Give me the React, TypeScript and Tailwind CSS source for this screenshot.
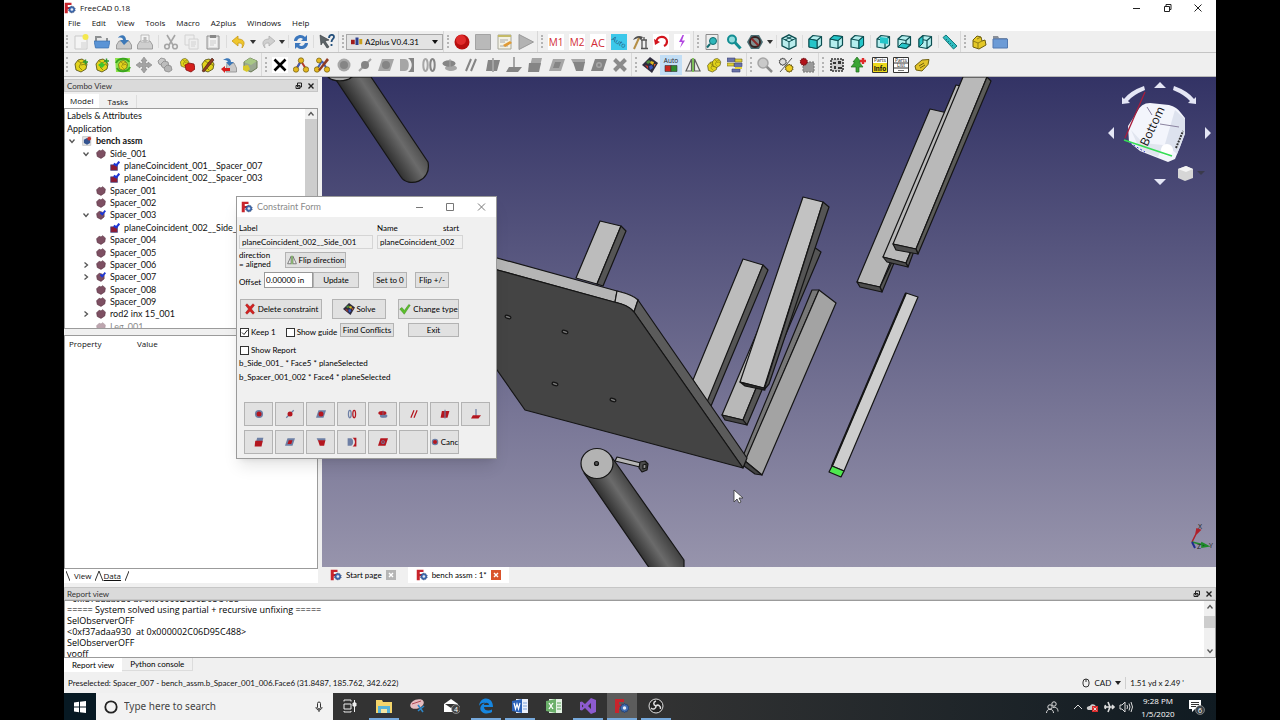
import { useState } from "react";
import type { ReactNode } from "react";
import { clsx } from "clsx";

const gearPath =
    "M8 1.5l1.2 2 2.2-.6.4 2.3 2.2.8-1 2 1 2-2.2.8-.4 2.3-2.2-.6L8 14.5l-1.2-2-2.2.6-.4-2.3-2.2-.8 1-2-1-2 2.2-.8.4-2.3 2.2.6z";

const part = (
    <g stroke="#4b4710" strokeWidth="0.8" strokeLinejoin="round">
        <path d="M2 7l3-4 4-1 3 2 2 3-1 5-5 3-5-2z" fill="#e2d31c" />
        <path d="M5 4l3 2 4-2M8 6l-2 4 3 3M8 8l4-1 1 2" fill="none" stroke="#7d750f" />
    </g>
);

const greyPart = (
    <g stroke="#8a8a8a" strokeWidth="0.8" strokeLinejoin="round">
        <path d="M1 4l3-3 4 1 1 4-3 3-4-2z" fill="#c9c9c9" />
        <path d="M4 7l3-3 4 1 1 4-3 3-4-2z" fill="#bdbdbd" />
        <path d="M7 11l3-3 4 1 1 4-3 2-4-1z" fill="#b5b5b5" />
    </g>
);

const cube = (
    <path
        d="M2 5l4-3.5 8.5 1V11L10 14.5 2 13zM2 5l8 1.5v8M10 6.5l4.5-4"
        fill="#b4eeee"
        stroke="#0b4d50"
        strokeWidth="1.2"
        strokeLinejoin="round"
    />
);

const freecad = (
    <>
        <path d="M1 1h9v3H5v2.5h3.5v3H5V15H1z" fill="#c8242c" />
        <g transform="translate(4.5 4) scale(.75)">
            <path d={gearPath} fill="#3f6db3" stroke="#203d73" strokeWidth="1" />
            <circle cx="8" cy="8" r="2.3" fill="#e8ecf5" />
        </g>
    </>
);

// constraint pictograms are drawn once and tinted: a = moved part, b = fixed part
function constraint(kind: string, a: string, b: string): ReactNode {
    switch (kind) {
        case "point":
            return <><circle cx="8" cy="8" r="6.5" fill={b} /><circle cx="8" cy="8" r="4" fill={a} /></>;
        case "pointLine":
            return <><path d="M2 14L14 2" stroke={b} strokeWidth="2" /><circle cx="8" cy="8" r="4" fill={a} /></>;
        case "pointPlane":
            return <><path d="M4 2h12l-4 12H0z" fill={b} /><circle cx="8" cy="8" r="4" fill={a} /></>;
        case "circular":
            return <><ellipse cx="4.5" cy="8" rx="2.2" ry="6" fill="none" stroke={b} strokeWidth="2" /><ellipse cx="11.5" cy="8" rx="2.2" ry="6" fill="none" stroke={a} strokeWidth="2" /></>;
        case "axial":
            return <><ellipse cx="9" cy="11" rx="6" ry="3" fill={b} /><ellipse cx="7" cy="6.5" rx="6.5" ry="3.2" fill={a} /><path d="M8 2v12" stroke={b} /></>;
        case "axisParallel":
            return <path d="M3 14L8 2M8 14l5-12" stroke={a} strokeWidth="2" />;
        case "axisPlane":
            return <><path d="M3 3h12l-3 11H1z" fill={a} /><path d="M8 1v14" stroke={b} strokeWidth="1.8" /></>;
        case "normal":
            return <><path d="M8 0v11" stroke={b} strokeWidth="2" /><path d="M3 10h13l-4 5H0z" fill={a} /></>;
        case "planesParallel":
            return <><path d="M5 1h10l-2 8H3z" fill={b} /><path d="M2 6h12l-2 9H1z" fill={a} /></>;
        case "coincident":
            return <><path d="M4 2h12l-4 12H0z" fill={b} /><path d="M6 5h6l-2 6H4z" fill={a} /></>;
        case "angled":
            return <><path d="M1 2h14v4H3z" fill={b} /><path d="M3 5h12l-2 9H6z" fill={a} /></>;
        case "sphere":
            return <><path d="M1 2h5c5 0 5 12 0 12H1z" fill={b} /><path d="M9 1h6v14H9c5-4 5-10 0-14z" fill={a} /></>;
        case "centerOfMass":
            return <><path d="M4 2h12l-4 12H0z" fill={a} /><circle cx="8" cy="8" r="3" fill={b} /><circle cx="8" cy="8" r="1.5" fill={a} /></>;
        default:
            return null;
    }
}

const constraintKinds = [
    "point", "pointLine", "pointPlane", "sphere", "circular", "axial", "axisParallel",
    "axisPlane", "normal", "planesParallel", "coincident", "angled", "centerOfMass",
];

const icons: Record<string, ReactNode> = {
    freecad,
    new: <><path d="M2 2h12v13H2z" fill="#f4f4f4" stroke="#c9c9c9" /><circle cx="12.5" cy="3" r="3" fill="#f4e84f" /><path d="M8 8h5v6H8z" fill="#e2e2e2" /></>,
    open: <><path d="M1 2h6l1 2h6v9H1z" fill="#8d9092" /><path d="M3 4h9v6H3z" fill="#e8e8e8" /><path d="M0 7h16l-1.5 7H1.500z" fill="#5a94d6" stroke="#386fae" strokeWidth=".7" /></>,
    save: <><path d="M3 7h10l2.500 4v4H.5v-4z" fill="#c9c9c9" stroke="#8b8b8b" strokeWidth=".8" /><path d="M2 4c2-4 8-4 8 2h3L8 11 4 6h3c0-2-2-3-5-2z" fill="#3c78b8" /></>,
    saveAs: <><path d="M3 7h10l2.500 4v4H.5v-4z" fill="#cfcfcf" stroke="#909090" strokeWidth=".8" /><path d="M4 1h8v7H4z" fill="#f4f4f4" stroke="#b0b0b0" strokeWidth=".8" /><path d="M6.500 3h3v3h2L8 9 4.500 6h2z" fill="#bbb" /></>,
    cut: <g fill="none" stroke="#a5a5a5" strokeWidth="1.6"><path d="M4 1l6 10M12 1L6 11" /><circle cx="4" cy="12.500" r="2.300" /><circle cx="12" cy="12.500" r="2.300" /></g>,
    copy: <g fill="#efefef" stroke="#d2d2d2"><path d="M1 1h9v10H1z" /><path d="M5 5h9v10H5z" /><path d="M7 8h5M7 10h5M7 12h4" /></g>,
    paste: <><path d="M2 2h12v13H2z" fill="#dedede" stroke="#909090" /><path d="M4 4h8v9H4z" fill="#f2f2f2" /><path d="M5 1h6v3H5z" fill="#888" /><path d="M5 7h6M5 9h6M5 11h4" stroke="#ccc" /></>,
    undo: <path d="M1 7l6-5v3c6 0 8 4 4 9 1-4 0-5-4-5v3z" fill="#efc62c" stroke="#c99a15" strokeWidth=".8" />,
    redo: <path d="M15 7L9 2v3c-6 0-8 4-4 9-1-4 0-5 4-5v3z" fill="#cfcfcf" stroke="#b0b0b0" strokeWidth=".8" />,
    refresh: <><path d="M1 7c0-6 8-8 11-4l2-2v6H8l2-2C8 3 5 4 4 7z" fill="#3c77bd" /><path d="M15 9c0 6-8 8-11 4l-2 2V9h6l-2 2c2 2 5 1 6-2z" fill="#3c77bd" /></>,
    whatsThis: <><path d="M1 1l9 5-4 1 4 6-2 1-4-6-2 3z" fill="#5d6468" stroke="#32373a" strokeWidth=".6" /><path d="M10 4c0-4 5-4 5-1 0 2-2.500 2-2.500 5M12.500 10v2" fill="none" stroke="#24507c" strokeWidth="1.800" /></>,
    record: <><circle cx="8" cy="8" r="7.500" fill="#b80f0f" /><circle cx="7" cy="6" r="5" fill="#e02b2b" /></>,
    stop: <path d="M.5.5h15v15H.5z" fill="#b9b9b9" stroke="#a3a3a3" />,
    macroEdit: <><path d="M1 1h13v14H1z" fill="#f3f1e4" stroke="#a8a89a" /><path d="M1 1h13v2H1z" fill="#c4ba67" /><path d="M3 6h8M3 8h5M3 12h8" stroke="#aaa" /><path d="M6 11l7-4 2 2-7 4z" fill="#e09a35" /></>,
    play: <path d="M1 .5l14.500 7.500L1 15.500z" fill="#b3b3b3" stroke="#999" />,
    M1: <><path d="M0 0h16v16H0z" fill="#fff" /><text x="8" y="11.500" fontSize="10" textAnchor="middle" fill="#d22c35" fontFamily="Open Sans, sans-serif">M1</text></>,
    M2: <><path d="M0 0h16v16H0z" fill="#fff" /><text x="8" y="12" fontSize="10" textAnchor="middle" fill="#d22c35" fontFamily="Open Sans, sans-serif">M2</text></>,
    AC: <><path d="M0 0h16v16H0z" fill="#fff" /><text x="8" y="12.500" fontSize="11" textAnchor="middle" fill="#d22c35" fontFamily="Open Sans, sans-serif">AC</text></>,
    autoBlue: <><path d="M0 0h16v16H0z" fill="#3cc8ea" /><text x="0" y="6" fontSize="7" transform="rotate(33 0 6)" fill="#1d5b82" fontFamily="Open Sans, sans-serif">Auto</text></>,
    tools: <><path d="M1 6c2-4 6-5 10-3L9 6 6 4z" fill="#4f4f4f" /><path d="M7 4L2 15" stroke="#b58e45" strokeWidth="2" /><path d="M10 6v8M14 6v8M9 14.500h7M9 6h6M12 3v3" stroke="#555" strokeWidth="1.300" /></>,
    redUndo: <><path d="M0 0h16v16H0z" fill="#fff" /><path d="M1 5l1 6 5-3z" fill="#d3141c" /><path d="M3.500 8c0-7 10.500-6.500 10.500-.500 0 2-1 3.500-3 4.500" fill="none" stroke="#d3141c" strokeWidth="2.200" /></>,
    bolt: <><path d="M0 0h16v16H0z" fill="#fff" /><path d="M8.500 1L5 8h3l-2 6 5-7.500H8L10 1z" fill="#b146e0" /></>,
    fitAll: <><path d="M2 .5h12v15H2z" fill="#eee" stroke="#8b8b8b" /><circle cx="9" cy="7" r="3.500" fill="#2eb6ba" stroke="#136c70" /><path d="M6 10l-3 3.500" stroke="#136c70" strokeWidth="2" /></>,
    fitSel: <><circle cx="6" cy="5.500" r="4" fill="#8fdcdc" stroke="#128d92" strokeWidth="2" /><path d="M9 8.500l5.500 6" stroke="#128d92" strokeWidth="3" /></>,
    drawStyle: <><path d="M4 1h8l4 7-4 7H4L0 8z" fill="#4a6c72" /><circle cx="8" cy="8" r="5" fill="#7f8f90" stroke="#35201f" strokeWidth="1.800" /><path d="M4.500 4.500l7 7" stroke="#8c2727" strokeWidth="2" /></>,
    iso: <><path d="M8 .8l7 3.500v7.500l-7 3.500-7-3.500V4.300z" fill="#b9ecec" stroke="#0b4d50" strokeWidth="1.300" /><path d="M1 4.300l7 3.500 7-3.500M8 8v7M5 2.500l7 3.500M11 2.500L4 6" stroke="#0b4d50" fill="none" /></>,
    front: <>{cube}<path d="M2 5l8 1.500v8L2 13z" fill="#25c5c9" stroke="#0b4d50" /></>,
    top: <>{cube}<path d="M2 5l4-3.500 8.500 1L10 6.500z" fill="#25c5c9" stroke="#0b4d50" /></>,
    right: <>{cube}<path d="M10 6.500l4.500-4V11L10 14.500z" fill="#25c5c9" stroke="#0b4d50" /></>,
    rear: <>{cube}<path d="M5 3l8 1v6L5 9z" fill="#25c5c9" /></>,
    bottom: <>{cube}<path d="M2 13l4-4 8 1.500-4 4z" fill="#25c5c9" stroke="#0b4d50" /></>,
    left: <>{cube}<path d="M2 5l4-3v7l-4 4z" fill="#25c5c9" stroke="#0b4d50" /></>,
    ruler: <path d="M1 3.500L4 1l11 11-3.500 3zM4 6l1-1M6 8l1-1M8 10l1-1M10 12l1-1" fill="#2fbcc0" stroke="#16767a" />,
    partYellow: <><path d="M2 6l4-4 4 1 1 4 3-1 1 5-7 4-6-2z" fill="#e4c826" stroke="#6e5f0e" /><path d="M2 7l5 2v5M7 9l4-2M10 3L6 5" fill="none" stroke="#6e5f0e" strokeWidth=".7" /></>,
    folder: <><path d="M1 2h5l1 2h8v10H1z" fill="#8a8f98" /><path d="M1 5h14.500v9H1z" fill="#6c9bd6" stroke="#5279b0" /></>,
    addPart: <>{part}<path d="M10 5h5M12.500 2.500v5" stroke="#2f9c2f" strokeWidth="1.500" /></>,
    addShape: <>{part}<path d="M4 8l4-3 3 3-3 3z" fill="#3ec42e" /><path d="M10 4h5M12.500 1.500v5" stroke="#2f9c2f" strokeWidth="1.500" /></>,
    update: <><path d="M0 1h15v14H1z" fill="#8ee24b" /><g transform="translate(2 2) scale(.75)">{part}</g><path d="M1 6c2-5 11-6 13-1M15 10c-2 5-11 6-13 1" fill="none" stroke="#3aa51f" strokeWidth="2" /></>,
    move: <path d="M8 0l3 4H9.500v2.500H12V5l4 3-4 3V9.500H9.500V12H11l-3 4-3-4h1.500V9.500H4V11L0 8l4-3v1.500h2.500V4H5z" fill="#a3a3a3" stroke="#888" strokeWidth=".6" />,
    duplicate: greyPart,
    convert: <><g transform="scale(.7)">{part}</g><path d="M6 8l4-2 5 1 1 5-4 3-5-2z" fill="#d6201c" stroke="#831010" strokeWidth=".8" /></>,
    editPart: <>{part}<path d="M2 14L12 1l2 2L4 15z" fill="#8f3b24" stroke="#3d1a10" strokeWidth=".6" /></>,
    saveClose: <><path d="M6 6h7l2.500 5v4H5z" fill="#c9c9c9" stroke="#8b8b8b" strokeWidth=".8" /><path d="M2 3c4-3 8-2 8 2h3L8.500 9 5 5h2c-1-2-3-2-5-2z" fill="#3c78b8" /><path d="M0 12l4-3v2h5v3H4v2z" fill="#d81c1c" /></>,
    isolate: <><path d="M2 5l6-4 7 3v7l-6 4-7-3z" fill="#9aa891" stroke="#6a7a55" /><path d="M2 5l6-4 7 3-6 4z" fill="#a8c884" /><path d="M1 9l5-1 2 4-3 3-4-2z" fill="#d9c92b" /></>,
    deleteX: <><path d="M0 0h16v16H0z" fill="#fff" /><path d="M2.500 2.500l11 11M13.500 2.500l-11 11" stroke="#000" strokeWidth="2.600" /></>,
    defineCon: <><path d="M8 4L3 12M8 4l5 8" stroke="#b63b2b" strokeWidth="2" /><path d="M8 4L4 11" stroke="#3f5fb5" strokeWidth="2" /><g fill="#e4b81f" stroke="#6f5a10" strokeWidth=".7"><circle cx="8" cy="3.500" r="2.700" /><circle cx="3" cy="12.500" r="2.700" /><circle cx="13" cy="12.500" r="2.700" /></g></>,
    editCon: <><path d="M8 4L3 12M8 4l5 8" stroke="#3f5fb5" strokeWidth="2" /><g fill="#e4b81f" stroke="#6f5a10" strokeWidth=".7"><circle cx="5" cy="3.500" r="2.500" /><circle cx="3" cy="12.500" r="2.700" /><circle cx="13" cy="12.500" r="2.700" /></g><path d="M4 13L13 1l2 2L6 14z" fill="#8f3b24" /></>,
    greyX: <path d="M2.500 2.500l11 11M13.500 2.500l-11 11" stroke="#8b8b8b" strokeWidth="4" />,
    solve: <><path d="M8 0l8 6-6 10L0 8z" fill="#2f2c3e" /><path d="M4 5l3-2 2 2-3 2z" fill="#4b8a3a" /><path d="M9 4l3 1-1 3-3-2z" fill="#e0b91f" /><path d="M3 8l3 1v3z" fill="#cf3b2a" /><path d="M7 9l3-1 1 3-3 2z" fill="#3b58c0" /><path d="M12 7l2 0-2 3z" fill="#dc5a28" /></>,
    autoSolve: <><text x="8" y="6" fontSize="6.500" textAnchor="middle" fill="#222" fontFamily="Open Sans, sans-serif">Auto</text><path d="M2 8.500h6v6H2z" fill="#c9281f" stroke="#333" strokeWidth=".6" /><path d="M8 8.500h6v6H8z" fill="#2d8c2d" stroke="#333" strokeWidth=".6" /></>,
    flip: <><path d="M6.500 2v12H1zM9.500 2v12H15z" fill="#eee" stroke="#5d5d5d" strokeWidth="1.200" /><path d="M8 1v14" stroke="#66b53a" strokeWidth="1.600" /></>,
    dof: <><g transform="translate(0 3) scale(.8)">{part}</g><g transform="translate(5 0) scale(.7)">{part}</g></>,
    structure: <><path d="M0 1h8v3.500H0zM7 6h8v3.500H7zM5 12h8v3H5z" fill="#6a73a8" stroke="#3b4275" strokeWidth=".6" /><path d="M8 2h7v3H8zM0 6h7v3H0z" fill="#e1d239" stroke="#6b6418" strokeWidth=".6" /><path d="M8 10h7v2H8z" fill="#e1d239" /></>,
    magnifier: <><path d="M9 9l6 6" stroke="#8a8a8a" strokeWidth="2.500" /><circle cx="6" cy="6" r="5" fill="#c9c9c9" stroke="#a6a6a6" strokeWidth="1.500" /></>,
    gears: <><g transform="scale(.6)"><path d={gearPath} fill="#ddd" stroke="#444" strokeWidth="1.500" /></g><g transform="translate(6 6) scale(.65)"><path d={gearPath} fill="#f0cc20" stroke="#6b5c10" strokeWidth="1.500" /></g><path d="M14 1L2 15" stroke="#555" /></>,
    gearRed: <><path d="M4 5h11v10H4z" fill="#9a9a9a" stroke="#777" strokeDasharray="2 1" /><g transform="scale(.6)"><path d={gearPath} fill="#b3121a" stroke="#7c0d12" strokeWidth="1.500" /></g></>,
    bom: <><path d="M2 2h12v12H2z" fill="#ccc" stroke="#333" strokeWidth="1.600" strokeDasharray="2 1" /><path d="M4 5h3v2H4zM9 4h3v3H9zM5 9h2v3H5zM9 10h4v2H9z" fill="#333" /></>,
    tree: <><path d="M7 0l4 5H9l4 5H9v5H6v-5H1l4-5H3z" fill="#3aa534" stroke="#1f6b1c" strokeWidth=".7" /><path d="M10 4h6M13 1v6" stroke="#e02a2a" strokeWidth="2.400" /></>,
    info: <><path d="M.5.500h15v15H.5z" fill="#fff" stroke="#333" /><path d="M1 6h14v9H1z" fill="#ecd81c" /><text x="8" y="5" fontSize="5" textAnchor="middle" fill="#222" fontFamily="Open Sans, sans-serif">Parts</text><text x="8" y="13.500" fontSize="7" fontWeight="700" textAnchor="middle" fill="#111" fontFamily="Roboto, sans-serif">Info</text></>,
    list: <><path d="M.5.500h15v15H.5zM1 6h14M1 11h14" fill="#fff" stroke="#333" /><text x="8" y="5" fontSize="5" textAnchor="middle" fill="#222" fontFamily="Open Sans, sans-serif">Parts</text><text x="8" y="10.300" fontSize="5" textAnchor="middle" fill="#222" fontFamily="Open Sans, sans-serif">List</text><path d="M5 13.500h6" stroke="#777" /></>,
    tag: <><path d="M1 9l7-6 7-.500-1 5-6 6.500-6-1z" fill="#e3c42a" stroke="#6e5f0e" /><path d="M5 9l5-3M6 11l5-3" stroke="#6e5f0e" /></>,
    treePart: <path d="M1 6l4-4 3 1 3-2 4 4-1 6-6 4-6-3z" fill="#7d4f62" stroke="#5a3443" />,
    treePartCheck: <><path d="M1 6l4-4 4 1 4 2v6l-5 4-6-3z" fill="#7d4f62" stroke="#5a3443" /><path d="M7 4l3 3 5-6" fill="none" stroke="#1d37d6" strokeWidth="3" /></>,
    treeLink: <><path d="M1 6h11v9H1z" fill="#8d1c34" stroke="#3b4a8c" /><path d="M6 4l4 3 5-6" fill="none" stroke="#1d37d6" strokeWidth="3.500" /></>,
    treeDoc: <><path d="M1 1h13v14H1z" fill="#e6e6e6" stroke="#b2b2b2" /><path d="M3 6l5-3 5 3v5l-5 3-5-3z" fill="#34548f" /><circle cx="11.500" cy="4" r="3" fill="#c7352f" /></>,
    redX: <path d="M2 3l2-2 4 4 4-4 2 2-4 5 4 5-2 2-4-4-4 4-2-2 4-5z" fill="#d3201f" stroke="#8f1010" strokeWidth=".6" />,
    check: <path d="M1 8l3-2 3 4 6-8 2 1-8 12z" fill="#5bbf2a" stroke="#37851a" strokeWidth=".6" />,
};

for (const kind of constraintKinds) {
    icons[`grey-${kind}`] = constraint(kind, "#858585", "#a6a6a6");
    icons[`red-${kind}`] = constraint(kind, "#b4161f", "#6d7fa5");
}

function Icon({ name, className = "size-4" }: { name: string; className?: string }) {
    return (
        <svg viewBox="0 0 16 16" className={clsx("shrink-0", className)} aria-hidden="true">
            {icons[name]}
        </svg>
    );
}

function Handle() {
    return (
        <div className="flex w-2 shrink-0 justify-center self-stretch border-l border-[#d8d8d8] py-1 first:w-1.5 first:border-0">
            <div className="border-l-2 border-dotted border-[#b4b4b4]" />
        </div>
    );
}

function Sep() {
    return (
        <div className="flex w-1 shrink-0 justify-center self-stretch py-1">
            <div className="border-l border-[#dcdcdc]" />
        </div>
    );
}

function Drop() {
    return (
        <button className="flex w-2 shrink-0 justify-center" aria-label="More">
            <svg viewBox="0 0 6 4" className="w-1.5"><path d="M0 0h6L3 4z" fill="#333" /></svg>
        </button>
    );
}

function Tools({ names, width, active }: { names: string[]; width: string; active?: string }) {
    return (
        <div className={clsx("flex shrink-0", width)}>
            {names.map((n) => (
                <button
                    key={n}
                    aria-label={n}
                    className={clsx("flex h-5 flex-1 items-center justify-center", n === active && "bg-[#c2def5]")}
                >
                    <Icon name={n} />
                </button>
            ))}
        </div>
    );
}

const greyTools = [
    "deleteX", "defineCon", "editCon", "grey-point", "grey-pointLine", "grey-pointPlane", "grey-sphere",
    "grey-circular", "grey-axial", "grey-axisParallel", "grey-axisPlane", "grey-normal", "grey-planesParallel",
    "grey-coincident", "grey-angled", "grey-centerOfMass", "greyX",
];

function Toolbars() {
    return (
        <div className="bg-[#efefef]">
            <div className="flex h-[22px] items-center border-b border-[#c4c4c4]">
                <Handle />
                <Tools width="w-[86px]" names={["new", "open", "save", "saveAs"]} />
                <Sep />
                <Tools width="w-16" names={["cut", "copy", "paste"]} />
                <Sep />
                <Tools width="w-[21px]" names={["undo"]} />
                <Drop />
                <Tools width="w-[21px]" names={["redo"]} />
                <Drop />
                <Sep />
                <Tools width="w-[21px]" names={["refresh"]} />
                <Sep />
                <Tools width="w-[23px]" names={["whatsThis"]} />
                <Handle />
                <div className="flex h-4 w-[97px] shrink-0 items-center gap-0.5 border border-[#a8a8a8] bg-[#e3e3e3] px-1">
                    <svg viewBox="0 0 16 12" className="h-2.5 w-3 shrink-0" aria-hidden="true">
                        <path d="M0 3h5v6H0z" fill="#a01c1c" />
                        <path d="M6 0h4v10H6z" fill="#2d3f8f" />
                        <path d="M11 2h4v7h-4z" fill="#c9a01e" />
                    </svg>
                    <select aria-label="Workbench" className="min-w-0 flex-1 appearance-none font-['Lato',sans-serif] text-[8px] leading-3 text-black outline-none">
                        <option>A2plus V0.4.31</option>
                    </select>
                    <svg viewBox="0 0 6 4" className="w-1.5 shrink-0"><path d="M0 0h6L3 4z" fill="#111" /></svg>
                </div>
                <Handle />
                <Tools width="w-[86px]" names={["record", "stop", "macroEdit", "play"]} />
                <Handle />
                <Tools width="w-[148px]" names={["M1", "M2", "AC", "autoBlue", "tools", "redUndo", "bolt"]} />
                <Handle />
                <Tools width="w-[65px]" names={["fitAll", "fitSel", "drawStyle"]} />
                <Drop />
                <Sep />
                <Tools width="w-[22px]" names={["iso"]} />
                <Sep />
                <Tools width="w-16" names={["front", "top", "right"]} />
                <Sep />
                <Tools width="w-16" names={["rear", "bottom", "left"]} />
                <Sep />
                <Tools width="w-5" names={["ruler"]} />
                <Handle />
                <Tools width="w-[43px]" names={["partYellow", "folder"]} />
            </div>
            <div className="flex h-6 items-center border-b border-[#b9b9b9]">
                <Handle />
                <Tools
                    width="w-[191px]"
                    names={["addPart", "addShape", "update", "move", "duplicate", "convert", "editPart", "saveClose", "isolate"]}
                />
                <Handle />
                <Tools width="w-[362px]" names={greyTools} />
                <Handle />
                <Tools width="w-[107px]" names={["solve", "autoSolve", "flip", "dof", "structure"]} active="autoSolve" />
                <Handle />
                <Tools width="w-16" names={["magnifier", "gears", "gearRed"]} />
                <Handle />
                <Tools width="w-[107px]" names={["bom", "tree", "info", "list", "tag"]} />
            </div>
        </div>
    );
}

function DockHeader({ title }: { title: string }) {
    return (
        <div className="flex h-[13px] items-center gap-1 border border-[#c6c6c6] bg-[#dadada] px-0.5 text-[8px] leading-3 text-[#333]">
            <span className="flex-1 font-['Lato',sans-serif]">{title}</span>
            <button aria-label="Float">
                <svg viewBox="0 0 8 8" className="size-2" fill="none" stroke="#222"><path d="M2.500 1h4v4h-4zM1 3.500h4v3H1z" /></svg>
            </button>
            <button aria-label="Close">
                <svg viewBox="0 0 8 8" className="size-2" stroke="#222" strokeWidth="1.400"><path d="M1.500 1.500l5 5M6.500 1.500l-5 5" /></svg>
            </button>
        </div>
    );
}

interface TreeRow {
    label: string;
    depth: 0 | 1 | 2;
    icon: string;
    open?: boolean;
    style?: string;
}

const treeRows: TreeRow[] = [
    { label: "bench assm", depth: 0, icon: "treeDoc", open: true, style: "font-bold" },
    { label: "Side_001", depth: 1, icon: "treePart", open: true },
    { label: "planeCoincident_001__Spacer_007", depth: 2, icon: "treeLink" },
    { label: "planeCoincident_002__Spacer_003", depth: 2, icon: "treeLink" },
    { label: "Spacer_001", depth: 1, icon: "treePart" },
    { label: "Spacer_002", depth: 1, icon: "treePart" },
    { label: "Spacer_003", depth: 1, icon: "treePartCheck", open: true },
    { label: "planeCoincident_002__Side_001", depth: 2, icon: "treeLink" },
    { label: "Spacer_004", depth: 1, icon: "treePart" },
    { label: "Spacer_005", depth: 1, icon: "treePart" },
    { label: "Spacer_006", depth: 1, icon: "treePart", open: false },
    { label: "Spacer_007", depth: 1, icon: "treePartCheck", open: false },
    { label: "Spacer_008", depth: 1, icon: "treePart" },
    { label: "Spacer_009", depth: 1, icon: "treePart" },
    { label: "rod2 inx 15_001", depth: 1, icon: "treePart", open: false },
    { label: "Leg_001", depth: 1, icon: "treePart", style: "opacity-50" },
];

const indent = ["pl-0", "pl-3.5", "pl-7"];

function Chevron({ className, stroke = "#555" }: { className?: string; stroke?: string }) {
    return (
        <svg viewBox="0 0 8 8" className={clsx("size-2", className)} fill="none" stroke={stroke} strokeWidth="1.300">
            <path d="M1.500 2.500l2.500 3 2.500-3" />
        </svg>
    );
}

function ComboView() {
    return (
        <aside className="flex w-[258px] shrink-0 flex-col pt-0.5 pr-1 text-[8px] leading-3 text-[#111]">
            <DockHeader title="Combo View" />
            <div className="flex h-4 items-end">
                <button className="h-3.5 bg-white px-1.5">Model</button>
                <button className="h-[13px] border-r border-[#ddd] px-2">Tasks</button>
            </div>
            <div className="flex h-[221px] overflow-hidden border border-[#9b9b9b] bg-white font-['Lato',sans-serif] text-[9px]">
                <div className="min-w-0 flex-1">
                    <div className="flex h-[13px] items-center px-0.5">Labels &amp; Attributes</div>
                    <div className="flex h-[13px] items-center px-0.5">Application</div>
                    <ul className="flex h-[198px] flex-col">
                        {treeRows.map((r) => (
                            <li key={r.label} className={clsx("flex flex-1 items-center whitespace-nowrap", indent[r.depth], r.style)}>
                                <span className="flex w-3.5 justify-center">
                                    {r.open !== undefined && <Chevron className={r.open ? "" : "-rotate-90"} />}
                                </span>
                                <span className="mr-0.5 flex w-[15px] justify-center">
                                    <Icon name={r.icon} className="size-2.5" />
                                </span>
                                {r.label}
                            </li>
                        ))}
                    </ul>
                </div>
                <div className="w-3 shrink-0 bg-[#f0f0f0]">
                    <div className="flex h-2.5 items-center justify-center"><Chevron className="rotate-180" /></div>
                    <div className="h-full bg-[#cdcdcd]" />
                </div>
            </div>
            <div className="mt-1.5 flex-1 border border-[#9b9b9b] bg-white">
                <table className="w-full text-left">
                    <thead>
                        <tr className="h-4">
                            <th className="w-[70px] px-1 font-normal">Property</th>
                            <th className="px-0.5 font-normal">Value</th>
                        </tr>
                    </thead>
                </table>
            </div>
            <div className="mb-1 flex h-3.5 bg-white pl-0.5">
                <button className="flex items-center gap-1">
                    <svg viewBox="0 0 4 10" className="h-2.5 w-1"><path d="M0 0l4 10" stroke="#333" /></svg>
                    View
                    <svg viewBox="0 0 8 10" className="h-2.5 w-2" stroke="#333" fill="none"><path d="M0 10L4 0M4 0l4 10" /></svg>
                </button>
                <button className="flex items-center gap-1 underline">
                    Data
                    <svg viewBox="0 0 4 10" className="h-2.5 w-1"><path d="M0 10L4 0" stroke="#333" /></svg>
                </button>
            </div>
        </aside>
    );
}

function Viewport() {
    return (
        <svg viewBox="322 77 894 490" preserveAspectRatio="xMidYMid slice" className="min-h-0 w-full flex-1">
            <defs>
                <linearGradient id="sky" x1="0" y1="0" x2="0" y2="1">
                    <stop offset="0" stopColor="#333365" />
                    <stop offset="1" stopColor="#9794ac" />
                </linearGradient>
                <linearGradient id="rodA" gradientUnits="userSpaceOnUse" x1="368" y1="128" x2="402" y2="106">
                    <stop offset="0" stopColor="#2e2e2e" />
                    <stop offset=".5" stopColor="#6b6b6b" />
                    <stop offset="1" stopColor="#3c3c3c" />
                </linearGradient>
                <linearGradient id="rodB" gradientUnits="userSpaceOnUse" x1="615" y1="519" x2="645" y2="499">
                    <stop offset="0" stopColor="#303030" />
                    <stop offset=".5" stopColor="#6b6b6b" />
                    <stop offset="1" stopColor="#3c3c3c" />
                </linearGradient>
            </defs>
            <rect x="322" y="77" width="894" height="490" fill="url(#sky)" />
            <g stroke="#151515" strokeWidth="1.200" strokeLinejoin="round">
                <path d="M334 77L401 177C408 188 432 182 428 162L371 77z" fill="url(#rodA)" />
                <path d="M328 77c5 5 18 5 24 0z" fill="#aaa" />

                <path d="M600 221l21 5-24 58-21-6z" fill="#bcbcbc" />
                <path d="M621 226l5 5-23 55-6-2z" fill="#555" />
                <path d="M743 259l20 6-55 139-15-24z" fill="#bcbcbc" />
                <path d="M763 265l5 5-57 136-4-4z" fill="#555" />
                <path d="M722 415L795 243l19 4-71 173z" fill="#b8b8b8" />
                <path d="M814 247l7 5-74 173-4-5z" fill="#555" />
                <path d="M722 415l21 5 4 5-22-5z" fill="#444" />
                <path d="M812 290l7 0-73 170-3-4z" fill="#777" />
                <path d="M819 290l17 13-74 172-17-14z" fill="#a3a3a3" />
                <path d="M745 461l17 14-7-1-11-8z" fill="#444" />
                <path d="M803 197l20 5-59 186-24-6z" fill="#c2c2c2" />
                <path d="M823 202l6 5-60 177-5 6z" fill="#555" />
                <path d="M740 382l24 6 1 2-20-4z" fill="#2a2a2a" />

                <path d="M490 256l127 35c12 3 17 5 21 9l-4 12c-5-6-11-8-20-10L490 268z" fill="#b5b5b5" />
                <path d="M617 291l-2 11M638 300l-4 12" />
                <path d="M617 291c12 3 17 5 21 9l-4 12c-5-6-11-8-19-10z" fill="#c2c2c2" />
                <path d="M638 300l109 158-4 10L634 312z" fill="#5b5b5b" />
                <path d="M490 268l124 34c9 2 15 4 20 10l109 156-218-58-35-50z" fill="#444" />
                <g fill="#777">
                    <ellipse cx="508" cy="317" rx="3" ry="1.500" transform="rotate(18 508 317)" />
                    <ellipse cx="565" cy="332" rx="3" ry="1.500" transform="rotate(18 565 332)" />
                    <ellipse cx="555" cy="384" rx="3" ry="1.500" transform="rotate(18 555 384)" />
                    <ellipse cx="613" cy="400" rx="3" ry="1.500" transform="rotate(18 613 400)" />
                </g>

                <path d="M584 473l66 96h34v-9L611 456z" fill="url(#rodB)" />
                <ellipse cx="597" cy="463.500" rx="16" ry="15" fill="#b3b3b3" />
                <circle cx="596.500" cy="463.500" r="2" fill="#555" />
                <path d="M617 457l24 6-1 4-25-6z" fill="#b7b7b7" />
                <path d="M640 462l5-1 3 3-1 6-5 2-3-4z" fill="#4c4c4c" />
                <path d="M643 465l3-1v4l-3 1z" fill="#999" />

                <path d="M930 109l22 5-72 173-23-5z" fill="#b6b6b6" />
                <path d="M880 287l12-25 2 1-12 29z" fill="#555" />
                <path d="M857 282l23 5 2 5-22-5z" fill="#4d4d4d" />
                <path d="M956 85l22 5-72 173-23-6z" fill="#b9b9b9" />
                <path d="M906 263l6-14 2 2-6 16z" fill="#555" />
                <path d="M883 257l23 6 2 4-21-5z" fill="#4d4d4d" />
                <path d="M963 77h24L916 249l-23-5z" fill="#b9b9b9" />
                <path d="M987 77l4 4-73 173-2-5z" fill="#5b5b58" />
                <path d="M893 244l23 5 2 5-22-4z" fill="#4d4d4d" />

                <path d="M906 293l12 4-74 174-12-5z" fill="#cdcdcd" />
                <path d="M906 293l-74 173" strokeWidth="2" />
                <path d="M832 466l12 5-3 6-12-5z" fill="#4fe84f" />
            </g>

            {/* navigation cube */}
            <g fill="#e4e6f5">
                <path d="M1154 88l6-6 6 6zM1154 179l6 6 6-6zM1114 127l-6 6 6 6zM1205 127l6 6-6 6z" />
                <path d="M1144 86q-14 5-20 13l-2-2 0 7 8-1-2-2q5-6 17-11z" />
                <path d="M1174 86q14 5 20 13l2-2 0 7-8-1 2-2q-5-6-17-11z" />
            </g>
            <path d="M1128 126l9-14q4-9 13-9l19 2q8 2 12 8l4 5v15l-5 14-5 12-7 3-28-11-11-9z" fill="#f3f5fc" />
            <path d="M1175 110l10 9v15l-8 20-12-10z" fill="#dde2ee" />
            <path d="M1131 130l12 13 20 2-5 12-18-7z" fill="#e1e5ef" />
            <circle cx="1167" cy="150" r="6" fill="#fff" />
            <path d="M1145 92l-20 46" stroke="#a81d3c" strokeWidth="1.300" />
            <path d="M1124 140l48 16" stroke="#35dd55" strokeWidth="1.500" />
            <path d="M1130 143l15 9" stroke="#2a35c9" strokeDasharray="2 2" />
            <path d="M1160 124l19 3M1147 107l5 8" stroke="#8b83a0" />
            <text x="1152" y="126" fontSize="12" textAnchor="middle" dominantBaseline="central" transform="rotate(-65 1152 126)" fill="#111" fontFamily="Open Sans, sans-serif">
                Bottom
            </text>
            <path d="M1176 148l7-17" stroke="#333" strokeWidth="2" strokeDasharray="2 1" />
            <path d="M1178 169l8-3 7 3v9l-8 3-7-3z" fill="#d6d6d6" />
            <path d="M1178 169l8 3 7-3-7-3z" fill="#f4f4f4" />
            <path d="M1197 171h8l-4 4z" fill="#3a3a4c" />

            {/* axis cross */}
            <path d="M1192 542l6-12M1196 534l1-5 3 1z" stroke="#b0202a" strokeWidth="1.600" />
            <path d="M1192 542l16 4M1202 543l6 3-6 1z" stroke="#1f8a2b" strokeWidth="1.600" />
            <path d="M1192 542l3 6" stroke="#202a90" strokeWidth="2" />
            <g fontSize="7" fill="#222" fontFamily="Open Sans, sans-serif">
                <text x="1198" y="529">X</text>
                <text x="1197" y="549">Z</text>
                <text x="1209" y="548">Y</text>
            </g>
            <path d="M734 490v12l3-3 2 4 2-1-2-4h4z" fill="#fff" stroke="#333" strokeWidth=".8" />
        </svg>
    );
}

function DocTab({ label, active }: { label: string; active?: boolean }) {
    return (
        <div className={clsx("flex h-4 items-center gap-1 px-2 font-['Lato',sans-serif] text-[8px]", active && "bg-white")}>
            <Icon name="freecad" className="size-3" />
            <button>{label}</button>
            <button aria-label="Close tab" className={clsx("p-0.5", active ? "bg-[#d9532c]" : "bg-[#b5b5b5]")}>
                <svg viewBox="0 0 6 6" className="size-1.5" stroke="#fff" strokeWidth="1.400"><path d="M1 1l4 4M5 1L1 5" /></svg>
            </button>
        </div>
    );
}

function ReportView() {
    return (
        <section className="text-[9px] leading-[11px] text-black">
            <DockHeader title="Report view" />
            <div className="flex h-[58px] border border-[#9b9b9b] bg-white">
                <div className="flex min-w-0 flex-1 flex-col justify-end overflow-hidden px-0.5">
                    <p>&lt;0xf37adaa930 at 0x000002C06D95C488&gt;</p>
                    <p>===== System solved using partial + recursive unfixing =====</p>
                    <p>SelObserverOFF</p>
                    <p className="whitespace-pre">&lt;0xf37adaa930  at 0x000002C06D95C488&gt;</p>
                    <p>SelObserverOFF</p>
                    <p className="-mb-0.5">vooff</p>
                </div>
                <div className="flex w-[11px] shrink-0 flex-col items-center justify-between bg-[#f0f0f0] py-0.5">
                    <Chevron className="rotate-180" />
                    <div className="h-3 w-full bg-[#cdcdcd]" />
                    <div className="h-2" />
                    <Chevron />
                </div>
            </div>
            <div className="flex h-[15px] items-start font-['Lato',sans-serif] text-[8px]">
                <button className="h-3.5 bg-white px-2">Report view</button>
                <button className="h-[13px] border-r border-b border-[#dcdcdc] px-2">Python console</button>
            </div>
        </section>
    );
}

const btn = "flex items-center justify-center border border-[#b3b3b3] bg-[#e1e1e1] whitespace-nowrap";

function Check({ label, initial = false }: { label: string; initial?: boolean }) {
    const [on, setOn] = useState(initial);
    return (
        <label className="flex items-center gap-0.5 whitespace-nowrap">
            <span className="grid">
                <input
                    type="checkbox"
                    checked={on}
                    onChange={(e) => setOn(e.target.checked)}
                    className="peer size-[9px] appearance-none border border-[#333] bg-white [grid-area:1/1]"
                />
                <svg viewBox="0 0 9 9" className="pointer-events-none hidden size-[9px] [grid-area:1/1] peer-checked:block" fill="none" stroke="#222">
                    <path d="M2 4.500l2 2 3.500-4.500" />
                </svg>
            </span>
            {label}
        </label>
    );
}

const formRows = [
    ["point", "pointLine", "pointPlane", "circular", "axial", "axisParallel", "axisPlane", "normal"],
    ["planesParallel", "coincident", "angled", "sphere", "centerOfMass", ""],
];

function ConstraintForm() {
    return (
        <div
            role="dialog"
            aria-label="Constraint Form"
            className="absolute top-[196px] left-[236px] w-[261px] border border-[#9a9a9a] bg-[#f0f0f0] font-['Lato',sans-serif] text-[8px] leading-[10px] text-black shadow-lg"
        >
            <div className="flex h-5 items-center gap-1 bg-white px-1 text-[9px] text-[#8a8a8a]">
                <Icon name="freecad" className="size-3" />
                <span className="flex-1">Constraint Form</span>
                <svg viewBox="0 0 80 10" className="h-2.5 w-20" fill="none" stroke="#777">
                    <path d="M4 5.500h7M34.500 1.500h7v7h-7zM66 1.500l7 7M73 1.500l-7 7" />
                </svg>
            </div>
            <div className="px-0.5 pt-1.5 pb-1">
                <div className="flex gap-1">
                    <label className="w-[134px]">
                        Label
                        <input defaultValue="planeCoincident_002__Side_001" className="mt-0.5 block h-3.5 w-full border border-[#d5d5d5] px-0.5" />
                    </label>
                    <label className="w-[86px]">
                        <span className="flex justify-between pr-1"><span>Name</span><span>start</span></span>
                        <input defaultValue="planeCoincident_002" className="mt-0.5 block h-3.5 w-full border border-[#d5d5d5] px-0.5" />
                    </label>
                </div>
                <div className="flex h-[22px] items-center">
                    <span className="w-[46px] leading-[9px]">direction<br />= aligned</span>
                    <button className={clsx(btn, "h-4 w-[61px] gap-0.5")}>
                        <Icon name="flip" className="size-2.5" />
                        Flip direction
                    </button>
                </div>
                <div className="flex h-[18px] items-center">
                    <label htmlFor="offset" className="w-[25px] pt-1">Offset</label>
                    <input id="offset" defaultValue="0.00000 in" className="h-4 w-[49px] border border-[#999] bg-white px-px" />
                    <button className={clsx(btn, "h-4 w-[46px]")}>Update</button>
                    <button className={clsx(btn, "ml-3.5 h-4 w-[34px]")}>Set to 0</button>
                    <button className={clsx(btn, "ml-2 h-4 w-[34px]")}>Flip +/-</button>
                </div>
                <div className="mt-2.5 flex pl-px">
                    <button className={clsx(btn, "h-5 w-[82px] gap-0.5")}><Icon name="redX" className="size-3" />Delete constraint</button>
                    <button className={clsx(btn, "ml-2.5 h-5 w-[54px] gap-0.5")}><Icon name="solve" className="size-3" />Solve</button>
                    <button className={clsx(btn, "ml-3 h-5 w-[61px] gap-0.5")}><Icon name="check" className="size-3" />Change type</button>
                </div>
                <div className="mt-1 flex items-start pl-px">
                    <div className="flex w-[100px] gap-2.5 pt-1">
                        <Check label="Keep 1" initial />
                        <Check label="Show guide" />
                    </div>
                    <button className={clsx(btn, "h-3.5 w-[54px]")}>Find Conflicts</button>
                    <button className={clsx(btn, "ml-3.5 h-3.5 w-[51px]")}>Exit</button>
                </div>
                <div className="mt-2 pl-px"><Check label="Show Report" /></div>
                <p className="mt-px leading-[14px] whitespace-pre">
                    {"b_Side_001_ * Face5 * planeSelected\nb_Spacer_001_002 * Face4 * planeSelected"}
                </p>
                <div className="mt-[18px] flex flex-col gap-1 px-1">
                    {formRows.map((row, i) => (
                        <div key={i} className="flex gap-0.5 pl-px">
                            {row.map((k) => (
                                <button key={k} aria-label={k || "empty"} className={clsx(btn, "h-6 w-[29px]")}>
                                    {k && <Icon name={`red-${k}`} className="size-2.5" />}
                                </button>
                            ))}
                            {i === 1 && (
                                <button className={clsx(btn, "h-6 w-[29px] gap-0.5")}>
                                    <Icon name="red-point" className="size-2" />
                                    Canc
                                </button>
                            )}
                        </div>
                    ))}
                </div>
            </div>
        </div>
    );
}

const apps: { name: string; running?: boolean; active?: boolean; art: ReactNode }[] = [
    { name: "Task View", art: <g fill="none" stroke="#eee"><path d="M2 6h7v5H2zM2 3.500V2h7v1.500M2 13v1h7v-1M12.500 2v12" /><path d="M11 5h3v3h-3z" fill="#eee" /></g> },
    { name: "Explorer", running: true, art: <><path d="M0 2h6l1 2h9v11H0z" fill="#f4d56b" /><path d="M2 8h12v7H2z" fill="#58b4d8" /><path d="M5 11h6v4H5z" fill="#f4e6a3" /></> },
    { name: "Snip", art: <><ellipse cx="7" cy="6" rx="7" ry="4.500" fill="#e5bcc0" transform="rotate(-20 7 6)" /><path d="M2 6l9-3" stroke="#b24a55" /><path d="M8 7l5 7M14 8l-6 5" stroke="#2e87c8" strokeWidth="1.600" /></> },
    { name: "Mail", art: <><path d="M0 6l7-5 7 5v8H0z" fill="#fff" /><path d="M1 6h12L7 10z" fill="#333" /><circle cx="12" cy="11" r="4.500" fill="#444" stroke="#aaa" strokeWidth=".7" /><text x="12" y="13.500" fontSize="7" textAnchor="middle" fill="#fff" fontFamily="Open Sans, sans-serif">4</text></> },
    { name: "Edge", running: true, art: <path d="M1 8c1-10 14-10 14 1H6c0 4 5 4 8 2.500V14C7 18 0 13 3 8c1-2 3-3 5-3-4-1-6 1-7 3zm5-1h5c0-3-5-3-5 0z" fill="#1686e0" /> },
    { name: "Word", running: true, art: <><path d="M4 1h12v14H4z" fill="#eaf0fb" /><path d="M0 3l10-2v14L0 13z" fill="#2b62b8" /><path d="M2 5l1.500 6L5 6l1.500 5L8 5" fill="none" stroke="#fff" strokeWidth="1.200" /><path d="M11 5h4M11 8h4M11 11h4" stroke="#7da2dc" /></> },
    { name: "Excel", art: <><path d="M3 1h13v14H3z" fill="#e3f2e3" /><path d="M0 3l10-2v14L0 13z" fill="#6bb06a" /><path d="M3 5l4 6M7 5l-4 6" stroke="#fff" strokeWidth="1.300" /><path d="M11 5h4M11 8h4M11 11h4" stroke="#5aa55a" /></> },
    { name: "Visual Studio", running: true, art: <path d="M11 0l5 2v12l-5 2-6-6-3 2.500L0 12V4l2-.5L5 6zM11 5L8 8l3 3zM2 6.500v3L3.500 8z" fill="#8d5bd0" fillRule="evenodd" /> },
    { name: "FreeCAD", running: true, active: true, art: freecad },
    { name: "OBS", running: true, art: <><circle cx="8" cy="8" r="7" fill="#222" stroke="#ddd" /><path d="M8 8c-3-1-3-4 0-5M8 8c2-2 5 0 4.500 3M8 8c0 3-3 4-5 2" fill="none" stroke="#ddd" strokeWidth="1.500" /></> },
];

function Taskbar() {
    return (
        <footer className="flex h-[27px] shrink-0 bg-linear-to-r from-[#333] via-[#333] to-[#101b22] text-white">
            <button aria-label="Start" className="flex w-8 items-center justify-center bg-[#071923]">
                <svg viewBox="0 0 12 12" className="size-3" fill="#fff"><path d="M0 1.500l5-.700v4.700H0zM6 .700L12 0v5.500H6zM0 6.500h5v4.700l-5-.700zM6 6.500h6V12l-6-.800z" /></svg>
            </button>
            <div className="flex w-[237px] items-center gap-1.5 bg-[#f2f2f2] px-2">
                <svg viewBox="0 0 14 14" className="size-3.5 shrink-0"><circle cx="7" cy="7" r="5.700" fill="none" stroke="#222" strokeWidth="1.800" /></svg>
                <input aria-label="Search" placeholder="Type here to search" className="min-w-0 flex-1 font-['Noto_Sans',sans-serif] text-[10px] outline-none placeholder:text-[#444]" />
                <svg viewBox="0 0 8 12" className="mr-0.5 h-3 w-2" fill="none" stroke="#333"><path d="M2.500 2.500a1.500 1.500 0 013 0v4a1.500 1.500 0 01-3 0zM1 6c0 4 6 4 6 0M4 9v2" /></svg>
            </div>
            <div className="flex">
                {apps.map((a) => (
                    <button key={a.name} aria-label={a.name} className="flex w-[34px] justify-center px-0.5">
                        <span
                            className={clsx(
                                "flex flex-1 items-center justify-center border-b-2",
                                a.running ? "border-[#76a9dc]" : "border-transparent",
                                a.active && "bg-[#5c5c5c]"
                            )}
                        >
                            <svg viewBox="0 0 16 16" className="size-4">{a.art}</svg>
                        </span>
                    </button>
                ))}
            </div>
            <div className="ml-auto flex items-center pr-2.5">
                <svg viewBox="0 0 92 14" className="mr-1 h-3.5 w-[92px]" fill="none" stroke="#ddd">
                    <circle cx="12" cy="4" r="2.200" />
                    <circle cx="8" cy="7" r="2.200" />
                    <path d="M4.500 13c0-5 7-5 7 0M11 7.500c3-1 5 1 5 4M32 9l4-4 4 4" />
                    <path d="M45 9c-1-3 3-3 3-3 1-3 6-2 6 1v3h-8z" fill="#ccc" stroke="none" />
                    <path d="M50 6h6v6h-6z" fill="#dc2b2b" stroke="none" />
                    <path d="M51.500 7.500l3 3M54.500 7.500l-3 3" />
                    <path d="M62 7h10M66 2l2 5-2 5M70 5l2 2-2 2M63 5l1 2-1 2" strokeWidth="1.600" />
                    <path d="M78 5h2l3-3v10l-3-3h-2zM85 5q1 2 0 4M87 3.500q2 3.500 0 7M89 2q3 5 0 10" />
                </svg>
                <div className="w-10 text-center text-[8px] leading-[13px]">
                    <div>9:28 PM</div>
                    <div>1/5/2020</div>
                </div>
                <svg viewBox="0 0 18 18" className="ml-2.5 size-[18px]">
                    <path d="M1 2h12v9H7l-3 3v-3H1z" fill="#fff" />
                    <path d="M3 4.500h8M3 6.500h8M3 8.500h5" stroke="#333" />
                    <circle cx="12" cy="12" r="4.500" fill="#3b4247" stroke="#aaa" strokeWidth=".6" />
                    <text x="12" y="14.500" fontSize="7" textAnchor="middle" fill="#fff" fontFamily="Open Sans, sans-serif">6</text>
                </svg>
            </div>
        </footer>
    );
}

export default function App() {
    return (
        <div className="h-screen bg-black px-16 font-['Open_Sans',sans-serif]">
            <div className="flex h-full flex-col overflow-hidden bg-[#f0f0f0]">
                <header className="bg-white text-[8px] leading-3 text-[#111]">
                    <div className="flex h-[15px] items-center gap-1 pr-3">
                        <Icon name="freecad" className="size-3" />
                        <h1 className="flex-1">FreeCAD 0.18</h1>
                        <svg viewBox="0 0 72 10" className="h-2.5 w-[72px]" fill="none" stroke="#222">
                            <path d="M1 5.500h7M32.500 3.500h5v5h-5zM34 3V1.500h5v5h-1.500M62.500 1.500l7 7M69.500 1.500l-7 7" />
                        </svg>
                    </div>
                    <nav className="flex h-4 items-center gap-[11px] px-1">
                        {["File", "Edit", "View", "Tools", "Macro", "A2plus", "Windows", "Help"].map((m) => (
                            <button key={m}>{m}</button>
                        ))}
                    </nav>
                </header>
                <Toolbars />
                <main className="flex min-h-0 flex-1">
                    <ComboView />
                    <div className="flex min-w-0 flex-1 flex-col">
                        <Viewport />
                        <div className="flex h-5 gap-1">
                            <DocTab label="Start page" />
                            <DocTab label="bench assm : 1*" active />
                        </div>
                    </div>
                </main>
                <ReportView />
                <div className="flex h-5 items-center px-1 font-['Lato',sans-serif] text-[8px] text-[#111]">
                    <span className="flex-1">
                        Preselected: Spacer_007 - bench_assm.b_Spacer_001_006.Face6 (31.8487, 185.762, 342.622)
                    </span>
                    <button className="flex items-center gap-1 border-r border-[#d0d0d0] pr-1">
                        <svg viewBox="0 0 8 10" className="h-2.5 w-2" fill="none" stroke="#333"><rect x="1" y="1" width="6" height="8" rx="3" /><path d="M4 1v3" /></svg>
                        CAD
                        <svg viewBox="0 0 6 4" className="w-1.5"><path d="M0 0h6L3 4z" fill="#222" /></svg>
                    </button>
                    <span className="pr-7 pl-1">1.51 yd x 2.49 '</span>
                </div>
                <Taskbar />
            </div>
            <ConstraintForm />
        </div>
    );
}
